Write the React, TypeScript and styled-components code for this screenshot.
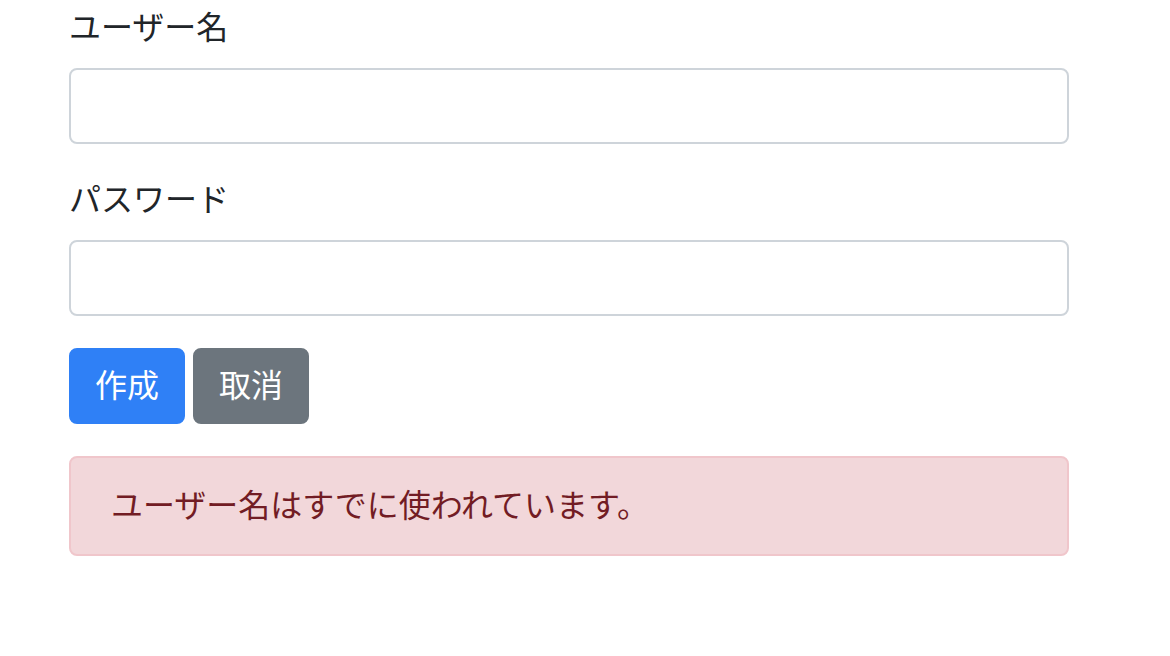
import React from "react";
import styled, { createGlobalStyle } from "styled-components";

const Global = createGlobalStyle`
  html, body { margin: 0; padding: 0; background: #fff; }
  body {
    font-family: "Noto Sans CJK JP", "Noto Sans", "Liberation Sans", sans-serif;
    color: #212529;
  }
  * { box-sizing: border-box; }
`;

const Page = styled.div`
  padding: 4px 0 0 69px;
`;

const Form = styled.form`
  width: 1000px;
  display: flex;
  flex-direction: column;
`;

const Group = styled.div`
  display: flex;
  flex-direction: column;
  margin-bottom: 32px;
`;

const Label = styled.label`
  font-size: 32px;
  line-height: 42px;
  margin-bottom: 22px;
  color: #212529;
`;

const Input = styled.input`
  height: 76px;
  width: 100%;
  border: 2px solid #ced4da;
  border-radius: 8px;
  padding: 12px 24px;
  font-size: 32px;
  font-family: inherit;
  background: #fff;
  outline: none;
`;

const Actions = styled.div`
  display: flex;
  gap: 8px;
`;

const Button = styled.button<{ $variant: "primary" | "secondary" }>`
  height: 76px;
  padding: 0 24px 6px;
  border: 2px solid ${(p) => (p.$variant === "primary" ? "#2f80f6" : "#6c757d")};
  background: ${(p) => (p.$variant === "primary" ? "#2f80f6" : "#6c757d")};
  color: #fff;
  border-radius: 8px;
  font-size: 32px;
  line-height: 48px;
  font-family: inherit;
  cursor: pointer;
`;

const Alert = styled.div`
  margin-top: 32px;
  height: 100px;
  padding: 21px 40px 27px;
  border: 2px solid #f0c6cb;
  background: #f2d7da;
  color: #721c24;
  border-radius: 8px;
  font-size: 32px;
  line-height: 48px;
`;

export default function App() {
  return (
    <>
      <Global />
      <Page>
        <Form onSubmit={(e) => e.preventDefault()}>
          <Group>
            <Label htmlFor="username">ユーザー名</Label>
            <Input id="username" type="text" />
          </Group>
          <Group>
            <Label htmlFor="password">パスワード</Label>
            <Input id="password" type="password" />
          </Group>
          <Actions>
            <Button type="submit" $variant="primary">作成</Button>
            <Button type="button" $variant="secondary">取消</Button>
          </Actions>
          <Alert role="alert">ユーザー名はすでに使われています。</Alert>
        </Form>
      </Page>
    </>
  );
}
